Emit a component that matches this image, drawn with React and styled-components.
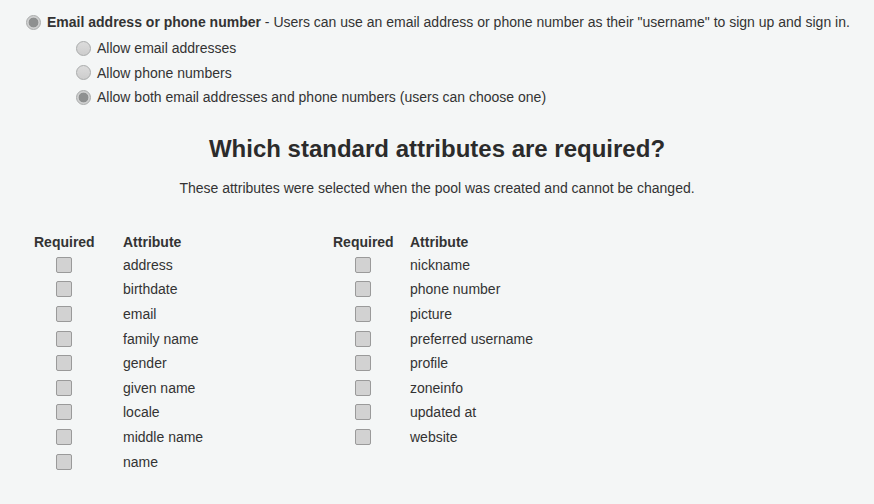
import styled, {createGlobalStyle} from "styled-components"

const left = ["address", "birthdate", "email", "family name", "gender", "given name", "locale", "middle name", "name"]
const right = ["nickname", "phone number", "picture", "preferred username", "profile", "zoneinfo", "updated at", "website"]

const options = [
  {label: "Allow email addresses", checked: false},
  {label: "Allow phone numbers", checked: false},
  {label: "Allow both email addresses and phone numbers (users can choose one)", checked: true},
]

const GlobalStyle = createGlobalStyle`
  body {
    margin: 0;
    background: #f4f6f6;
    color: #333;
    font-family: "Liberation Sans", Arial, sans-serif;
    font-size: 14px;
  }
`

const Page = styled.div`
  display: flex;
  flex-direction: column;
  padding-top: 10px;
  min-height: 494px;
`

const OptionRow = styled.label`
  display: flex;
  align-items: center;
  gap: 6px;
  height: ${p => p.$h}px;
  padding-left: ${p => p.$indent}px;
  white-space: nowrap;

  b {
    font-weight: bold;
  }
`

const Radio = styled.span`
  box-sizing: border-box;
  width: 15px;
  height: 15px;
  border-radius: 50%;
  flex: none;
  border: 1px solid #a9abab;
  background: ${p => p.$checked
    ? "radial-gradient(circle, #8e9090 0 4.6px, #cfd0d0 5.2px)"
    : "linear-gradient(#dcdcdc, #cdcdcd)"};
`

const SubOptions = styled.div`
  display: flex;
  flex-direction: column;
  margin-top: 2px;
`

const Heading = styled.h2`
  margin: 25px 0 0;
  font-size: 24px;
  line-height: 28px;
  font-weight: bold;
  text-align: center;
  color: #2b2b2b;
`

const Note = styled.p`
  margin: 16px 0 0;
  font-size: 14px;
  line-height: 18px;
  text-align: center;
`

const Tables = styled.div`
  display: flex;
  padding-left: 34px;
  margin-top: 35px;
`

const Table = styled.div`
  display: grid;
  grid-template-columns: 60px auto;
  grid-template-rows: 21px;
  grid-auto-rows: 24.6px;
  column-gap: ${p => p.$gap}px;
  align-items: center;
  width: ${p => p.$width || "auto"};
`

const Head = styled.div`
  font-weight: bold;
`

const CheckCell = styled.div`
  display: flex;
  justify-content: center;
`

const Box = styled.span`
  box-sizing: border-box;
  width: 16px;
  height: 16px;
  border: 1px solid #9a9a9a;
  border-radius: 2px;
  background: #d2d2d2;
`

function AttrTable({items, gap, width}) {
  return (
    <Table $gap={gap} $width={width}>
      <Head>Required</Head>
      <Head>Attribute</Head>
      {items.map(name => [
        <CheckCell key={name + "-c"}><Box/></CheckCell>,
        <div key={name}>{name}</div>,
      ])}
    </Table>
  )
}

export default function App() {
  return (
    <>
      <GlobalStyle/>
      <Page>
        <OptionRow $indent={26} $h={24}>
          <Radio $checked/>
          <span><b>Email address or phone number</b> - Users can use an email address or phone number as their "username" to sign up and sign in.</span>
        </OptionRow>
        <SubOptions>
          {options.map(o => (
            <OptionRow key={o.label} $indent={76} $h={24.5}>
              <Radio $checked={o.checked}/>
              <span>{o.label}</span>
            </OptionRow>
          ))}
        </SubOptions>
        <Heading>Which standard attributes are required?</Heading>
        <Note>These attributes were selected when the pool was created and cannot be changed.</Note>
        <Tables>
          <AttrTable items={left} gap={29} width="299px"/>
          <AttrTable items={right} gap={17}/>
        </Tables>
      </Page>
    </>
  )
}
